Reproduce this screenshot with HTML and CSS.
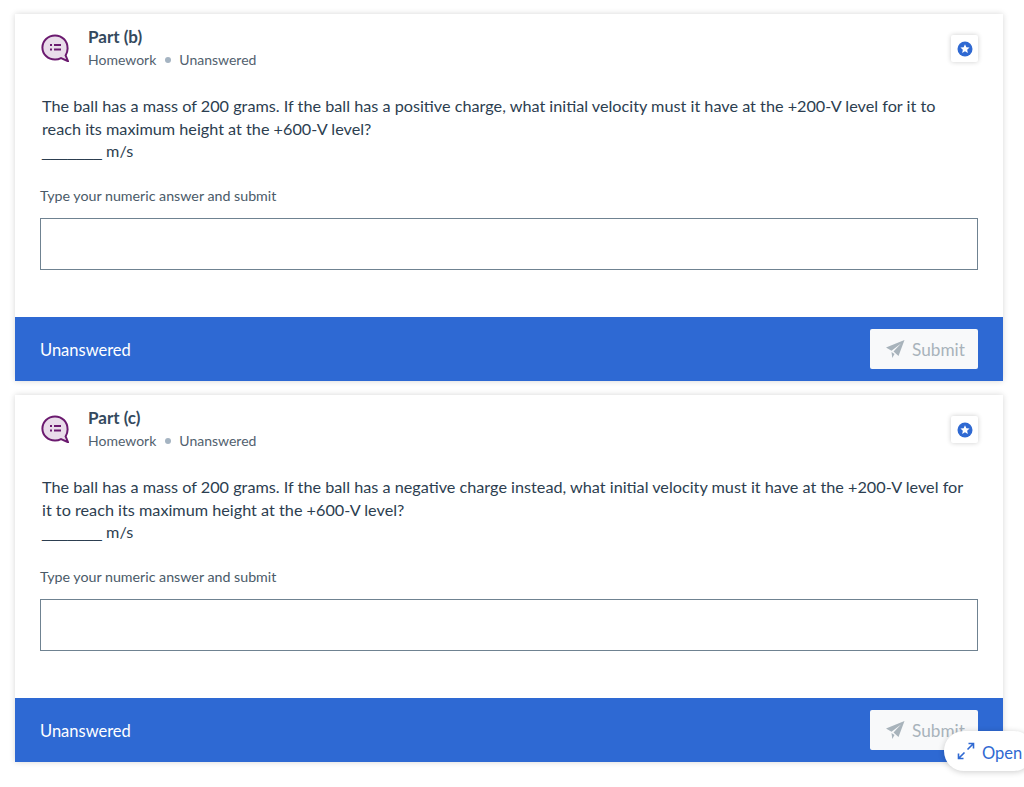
FILE: index.html
```html
<!DOCTYPE html>
<html lang="en">
<head>
<meta charset="utf-8">
<title>Homework</title>
<link rel="stylesheet" href="styles.css">
</head>
<body>
<main class="list">
  <section class="card">
    <div class="body">
      <header class="head">
        <svg class="bubble" viewBox="0 0 28 28" width="28" height="28"><path d="M14 1.4C7 1.4 1.4 6.800 1.4 13.500S7 25.600 14 25.600c2.300 0 4.300-.5 6-1.400l7 3-2.400-5.800c1.200-2 2-4 2-6.900C26.600 6.800 21 1.400 14 1.400z" fill="#e9dcea" stroke="#6b1a6f" stroke-width="2" stroke-linejoin="miter"/><path d="M9 11h2M9 15.500h2M13 11h7M13 15.500h7" stroke="#6b1a6f" stroke-width="2" fill="none"/></svg>
        <div class="titles">
          <h2 class="part">Part (b)</h2>
          <div class="meta"><span>Homework</span><i class="dot"></i><span>Unanswered</span></div>
        </div>
        <span class="star"><svg viewBox="0 0 16 16" width="16" height="16"><circle cx="8" cy="8" r="7.500" fill="#2f69d2"/><path d="M8 3.300l1.350 2.950 3.200.35-2.400 2.150.7 3.150L8 10.300l-2.850 1.600.7-3.150-2.400-2.150 3.200-.35z" fill="#fff"/></svg></span>
      </header>
      <p class="question">The ball has a mass of 200 grams. If the ball has a positive charge, what initial velocity must it have at the +200-V level for it to reach its maximum height at the +600-V level?<br><span class="blank">_______</span> m/s</p>
      <label class="prompt">Type your numeric answer and submit</label>
      <input class="answer" type="text">
    </div>
    <footer class="foot">
      <span class="status">Unanswered</span>
      <button class="submit" type="button"><svg viewBox="0 0 20 20" width="20" height="20"><path d="M19.500 1L1 8.500l5.500 3.200L16 4.500l-7.500 8 5 4.500zM6.500 13l.8 6 2.200-4z" fill="#a8b3bb"/></svg>Submit</button>
    </footer>
  </section>
  <section class="card">
    <div class="body">
      <header class="head">
        <svg class="bubble" viewBox="0 0 28 28" width="28" height="28"><path d="M14 1.4C7 1.4 1.4 6.800 1.4 13.500S7 25.600 14 25.600c2.300 0 4.300-.5 6-1.400l7 3-2.400-5.800c1.200-2 2-4 2-6.900C26.600 6.800 21 1.400 14 1.400z" fill="#e9dcea" stroke="#6b1a6f" stroke-width="2" stroke-linejoin="miter"/><path d="M9 11h2M9 15.500h2M13 11h7M13 15.500h7" stroke="#6b1a6f" stroke-width="2" fill="none"/></svg>
        <div class="titles">
          <h2 class="part">Part (c)</h2>
          <div class="meta"><span>Homework</span><i class="dot"></i><span>Unanswered</span></div>
        </div>
        <span class="star"><svg viewBox="0 0 16 16" width="16" height="16"><circle cx="8" cy="8" r="7.500" fill="#2f69d2"/><path d="M8 3.300l1.350 2.950 3.200.35-2.400 2.150.7 3.150L8 10.300l-2.850 1.600.7-3.150-2.400-2.150 3.200-.35z" fill="#fff"/></svg></span>
      </header>
      <p class="question">The ball has a mass of 200 grams. If the ball has a negative charge instead, what initial velocity must it have at the +200-V level for it to reach its maximum height at the +600-V level?<br><span class="blank">_______</span> m/s</p>
      <label class="prompt">Type your numeric answer and submit</label>
      <input class="answer" type="text">
    </div>
    <footer class="foot">
      <span class="status">Unanswered</span>
      <button class="submit" type="button"><svg viewBox="0 0 20 20" width="20" height="20"><path d="M19.500 1L1 8.500l5.500 3.200L16 4.500l-7.500 8 5 4.500zM6.500 13l.8 6 2.200-4z" fill="#a8b3bb"/></svg>Submit</button>
    </footer>
  </section>
</main>
<button class="open" type="button"><svg viewBox="0 0 18 18" width="18" height="18"><path d="M10.500 7.500L16 2M11.500 1.500h5v5M7.500 10.500L2 16M1.500 11.500v5h5" fill="none" stroke="#2f69d2" stroke-width="1.600"/></svg><span class="open-label">Open</span></button>
</body>
</html>
```
FILE: styles.css
```css
* { box-sizing: border-box; }
html, body { height: 100%; }
body {
  margin: 0;
  padding: 14px 21px 0 15px;
  background: #fff;
  font-family: "Lato", "Noto Sans", sans-serif;
  color: #2c3e50;
  overflow: hidden;
  position: relative;
}
.list { display: flex; flex-direction: column; gap: 14px; }
.card {
  display: flex;
  flex-direction: column;
  height: 367px;
  background: #fff;
  box-shadow: 0 0 6px rgba(0, 0, 0, .16);
}
.body { flex: 1; padding: 12px 25px 0; }
.head { display: flex; align-items: flex-start; height: 46px; }
.bubble { margin-top: 8px; margin-left: 1px; flex: none; }
.titles { margin-left: 19px; flex: 1; }
.part { margin: 0; font-size: 17px; line-height: 22px; font-weight: 700; color: #34495e; }
.meta { display: flex; align-items: center; margin-top: 2px; font-size: 14px; line-height: 20px; color: #52616e; }
.dot { width: 6px; height: 6px; margin: 0 8.500px; border-radius: 50%; background: #a5b4c2; }
.star {
  display: flex;
  align-items: center;
  justify-content: center;
  width: 27px;
  height: 27px;
  margin-top: 9px;
  border-radius: 2px;
  background: #fff;
  box-shadow: 0 0 5px rgba(0, 0, 0, .2);
}
.question { margin: 23px 8px 0 2px; font-size: 16.230px; line-height: 22.500px; color: #2c3e50; }
.blank { font-family: "Liberation Sans", sans-serif; font-size: 15.400px; }
.prompt { display: block; margin-top: 22px; font-size: 14.240px; line-height: 20px; color: #4a5a68; }
.answer { display: block; width: 100%; height: 52px; margin-top: 12px; border: 1px solid #6f8291; background: #fff; }
.foot {
  display: flex;
  align-items: center;
  justify-content: space-between;
  height: 64px;
  padding: 0 25px;
  background: #2e69d3;
}
.status { font-size: 16.500px; line-height: 22px; padding-top: 1px; color: #fff; }
.submit {
  display: flex;
  align-items: center;
  justify-content: center;
  gap: 7px;
  width: 108px;
  height: 40px;
  padding: 0 0 0 2px;
  border: 0;
  border-radius: 2px;
  background: #f8f9fa;
  color: #a8b3bb;
  font: 17.200px "Lato", "Noto Sans", sans-serif;
}
.open {
  position: absolute;
  left: 944px;
  top: 731px;
  display: flex;
  align-items: center;
  gap: 7px;
  width: 90px;
  height: 40px;
  padding: 0 0 0 13px;
  border: 0;
  border-radius: 20px;
  background: #fff;
  color: #2f69d2;
  box-shadow: 0 1px 6px rgba(0, 0, 0, .2);
  font: 16.500px "Lato", "Noto Sans", sans-serif;
}
.open-label { padding-top: 4px; }
```
